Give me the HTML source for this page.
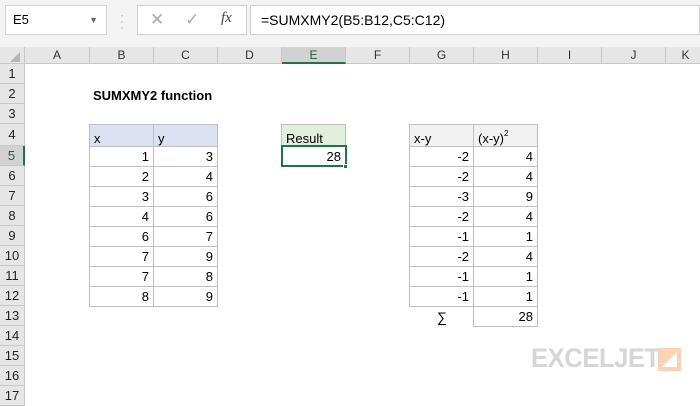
<!DOCTYPE html><html><head><style>
*{margin:0;padding:0;box-sizing:border-box}
body{width:700px;height:400px;overflow:hidden;background:#fff;font-family:"Liberation Sans",Calibri,sans-serif;font-size:13px;color:#000;position:relative}
.a{position:absolute}
.ch{position:absolute;top:47px;height:17px;background:#e6e6e6;border-right:1px solid #c8c8c8;border-bottom:1px solid #c8c8c8;text-align:center;font-size:12px;line-height:17px;color:#333}
.rh{position:absolute;left:0;width:25px;background:#e6e6e6;border-bottom:1px solid #c8c8c8;border-right:1px solid #c8c8c8;text-align:center;font-size:13px;color:#222}
.c{position:absolute;border:1px solid #bfbfbf;padding:0 4px;line-height:20px}
.r{text-align:right}
.hd{position:absolute;border:1px solid #bfbfbf;padding:0 4px;height:23px;line-height:27px}
</style></head><body>
<div class="a" style="left:0;top:0;width:700px;height:47px;background:#f3f3f3"></div>
<div class="a" style="left:5px;top:5px;width:102px;height:30px;background:#fff;border:1px solid #d0d0d0;line-height:28px;padding-left:7px;font-size:13px">E5<span style="position:absolute;right:8px;top:0;font-size:9px;color:#666">▼</span></div>
<div class="a" style="left:120px;top:12px;color:#aaa;font-size:12px;line-height:6px">·<br>·<br>·</div>
<div class="a" style="left:137px;top:5px;width:110px;height:30px;background:#fff;border:1px solid #d0d0d0"></div>
<div class="a" style="left:150px;top:10px;color:#aaa;font-size:17px">✕</div>
<div class="a" style="left:185px;top:10px;color:#aaa;font-size:17px">✓</div>
<div class="a" style="left:221px;top:10px;color:#444;font-size:15px;font-style:italic;font-family:'Liberation Serif',serif">fx</div>
<div class="a" style="left:250px;top:5px;width:450px;height:30px;background:#fff;border:1px solid #d0d0d0;line-height:28px;padding-left:10px;font-size:14px">=SUMXMY2(B5:B12,C5:C12)</div>
<div class="ch" style="left:0;width:25px"></div>
<div class="a" style="left:10px;top:52px;width:0;height:0;border-left:10px solid transparent;border-bottom:10px solid #b5b5b5"></div>
<div class="ch" style="left:25px;width:65px">A</div>
<div class="ch" style="left:90px;width:64px">B</div>
<div class="ch" style="left:154px;width:64px">C</div>
<div class="ch" style="left:218px;width:64px">D</div>
<div class="ch" style="left:282px;width:64px;background:#d2d2d2;border-bottom:2px solid #217346;color:#1e5e3a">E</div>
<div class="ch" style="left:346px;width:64px">F</div>
<div class="ch" style="left:410px;width:64px">G</div>
<div class="ch" style="left:474px;width:64px">H</div>
<div class="ch" style="left:538px;width:64px">I</div>
<div class="ch" style="left:602px;width:64px">J</div>
<div class="ch" style="left:666px;width:40px">K</div>
<div class="rh" style="top:64px;height:20px;line-height:20px">1</div>
<div class="rh" style="top:84px;height:20px;line-height:20px">2</div>
<div class="rh" style="top:104px;height:20px;line-height:20px">3</div>
<div class="rh" style="top:124px;height:22px;line-height:22px">4</div>
<div class="rh" style="top:146px;height:20px;line-height:20px;background:#d2d2d2;border-right:2px solid #217346;color:#1e5e3a">5</div>
<div class="rh" style="top:166px;height:20px;line-height:20px">6</div>
<div class="rh" style="top:186px;height:20px;line-height:20px">7</div>
<div class="rh" style="top:206px;height:20px;line-height:20px">8</div>
<div class="rh" style="top:226px;height:20px;line-height:20px">9</div>
<div class="rh" style="top:246px;height:20px;line-height:20px">10</div>
<div class="rh" style="top:266px;height:20px;line-height:20px">11</div>
<div class="rh" style="top:286px;height:20px;line-height:20px">12</div>
<div class="rh" style="top:306px;height:20px;line-height:20px">13</div>
<div class="rh" style="top:326px;height:20px;line-height:20px">14</div>
<div class="rh" style="top:346px;height:20px;line-height:20px">15</div>
<div class="rh" style="top:366px;height:20px;line-height:20px">16</div>
<div class="rh" style="top:386px;height:20px;line-height:20px">17</div>
<div class="a" style="left:93px;top:88px;font-weight:bold">SUMXMY2 function</div>
<div class="hd" style="left:89px;top:124px;width:65px;background:#d9e1f2">x</div>
<div class="hd" style="left:153px;top:124px;width:65px;background:#d9e1f2">y</div>
<div class="hd" style="left:281px;top:124px;width:65px;background:#e2efda">Result</div>
<div class="hd" style="left:409px;top:124px;width:65px;background:#f2f2f2">x-y</div>
<div class="hd" style="left:473px;top:124px;width:65px;background:#f2f2f2">(x-y)<span style="font-size:8px;position:relative;top:-7px">2</span></div>
<div class="a" style="left:281px;top:145px;width:66px;height:22px;border:2px solid #217346;text-align:right;padding-right:4px;line-height:20px">28</div>
<div class="a" style="left:343px;top:164px;width:5px;height:5px;background:#217346;border:1px solid #fff"></div>
<div id="t"></div>
<script>
var x=[1,2,3,4,6,7,7,8],y=[3,4,6,6,7,9,8,9],h='';
for(var i=0;i<8;i++){var t=146+i*20;var d=x[i]-y[i];
h+='<div class="c r" style="left:89px;top:'+t+'px;width:65px;height:21px">'+x[i]+'</div>';
h+='<div class="c r" style="left:153px;top:'+t+'px;width:65px;height:21px">'+y[i]+'</div>';
h+='<div class="c r" style="left:409px;top:'+t+'px;width:65px;height:21px">'+d+'</div>';
h+='<div class="c r" style="left:473px;top:'+t+'px;width:65px;height:21px">'+(d*d)+'</div>';}
h+='<div class="c r" style="left:473px;top:306px;width:65px;height:21px">28</div>';
document.getElementById('t').innerHTML=h;
</script>
<div class="a" style="left:437px;top:309px;font-size:14px">∑</div>
<div class="a" style="left:531px;top:343px;font-size:27px;font-weight:bold;color:#d6d6d6;letter-spacing:-0.5px;font-family:'Liberation Sans',sans-serif;transform:scaleX(0.95);transform-origin:left">EXCELJET</div>
<div class="a" style="left:658px;top:348px;width:23px;height:23px;background:#f9d2b8"></div>
<div class="a" style="left:662px;top:352px;width:0;height:0;border-top:15px solid transparent;border-right:15px solid #fff"></div>
</body></html>
